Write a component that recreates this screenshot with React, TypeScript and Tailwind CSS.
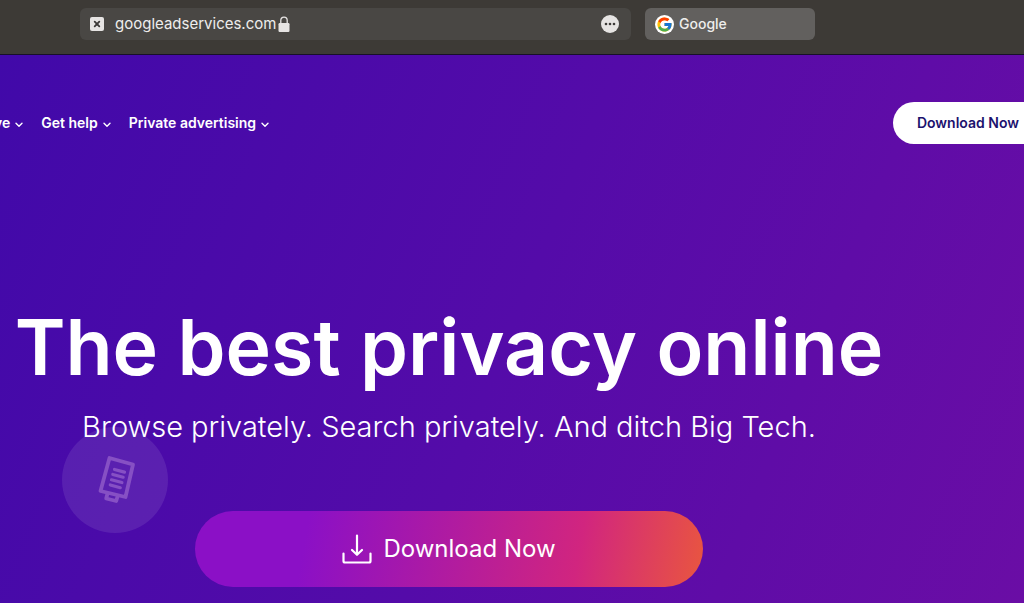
import { FcGoogle } from "react-icons/fc";

interface INavItem {
    title: string
};

const navItems = ["ve", "Get help", "Private advertising"];

function BrowserBar() {
    return (
        <header className="flex h-[55px] items-start border-b border-[#17102a] bg-[#3d3a36] pt-2 pl-20 font-['Inter',sans-serif] text-sm font-medium text-[#eeedec]">
            <div className="mr-[14px] flex h-8 w-[551px] items-center rounded-md bg-[#494744] pr-3 pl-[10px]">
                <button type="button" aria-label="Stop loading" className="mr-[11px] h-[14px] w-[14px]">
                    <svg viewBox="0 0 14 14" className="h-full w-full">
                        <rect width="14" height="14" rx="2" fill="#e6e4e3" />
                        <path d="M4.7 4.7l4.6 4.6M9.3 4.7L4.7 9.3" stroke="#3c3a38" strokeWidth="1.8" strokeLinecap="round" />
                    </svg>
                </button>
                <input aria-label="Address" defaultValue="googleadservices.com" className="w-[163px] bg-transparent text-[15px] font-normal outline-none" />
                <svg viewBox="0 0 12 16" className="h-4 w-3">
                    <rect x="0.5" y="7" width="11" height="9" rx="1.2" fill="#e6e4e3" />
                    <path d="M2.8 7.5V4.4a3.2 3.2 0 0 1 6.4 0v3.1" fill="none" stroke="#e6e4e3" strokeWidth="1.3" />
                </svg>
                <button type="button" aria-label="Page menu" className="ml-auto h-[18px] w-[18px]">
                    <svg viewBox="0 0 18 18" className="h-full w-full">
                        <circle cx="9" cy="9" r="9" fill="#e6e4e3" />
                        <circle cx="5" cy="9" r="1.3" fill="#3c3a38" />
                        <circle cx="9" cy="9" r="1.3" fill="#3c3a38" />
                        <circle cx="13" cy="9" r="1.3" fill="#3c3a38" />
                    </svg>
                </button>
            </div>
            <button type="button" className="flex h-8 w-[170px] items-center gap-[5px] rounded-md bg-[#62605e] pl-[10px]">
                <span className="flex h-[19px] w-[19px] items-center justify-center rounded-full bg-white">
                    <FcGoogle size={17} />
                </span>
                Google
            </button>
        </header>
    );
};

function NavItem({ title }: INavItem) {
    return (
        <button type="button" className="flex items-center gap-[5px]">
            {title}
            <svg viewBox="0 0 8 6" className="mt-1 h-[6px] w-2" fill="none" stroke="currentColor" strokeWidth="1.4" strokeLinecap="round" strokeLinejoin="round">
                <path d="M1 1.3l3 3 3-3" />
            </svg>
        </button>
    );
};

function ReceiptBadge() {
    return (
        <svg viewBox="0 0 106 106" className="h-[106px] w-[106px]" fill="none" stroke="#8650c4" strokeLinejoin="round" strokeLinecap="round">
            <circle cx="53" cy="53" r="53" fill="#ffffff" fillOpacity="0.09" stroke="none" />
            <path d="M47.500 31L71 37.500L63.500 70L38.500 64Z" strokeWidth="3.800" />
            <path d="M52.500 42.500l10 2.600M50.800 47.500l10.400 2.700M49.500 52.800l10.400 2.700M48.300 58l10 2.700" strokeWidth="3.200" />
            <path d="M45.500 66.500l-1.300 5 10 2.500 1.500-5" strokeWidth="3.800" />
        </svg>
    );
};

export default function App() {
    return (
        <div className="flex min-h-screen flex-col overflow-hidden">
            <BrowserBar />
            <main className="grow bg-linear-[112deg,#4109a9,#540ba9_50%,#6a0da5] font-['Inter',sans-serif] text-white">
                <div className="flex h-[136px] items-center justify-between">
                    <nav className="-ml-[6px] flex gap-[18px] text-sm font-semibold">
                        {navItems.map(item => <NavItem key={item} title={item} />)}
                    </nav>
                    <a href="#download" className="-mr-6 flex h-[42px] items-center rounded-l-full bg-white pr-[29px] pl-6 text-sm font-semibold whitespace-nowrap text-[#1c126e]">
                        Download Now
                    </a>
                </div>
                <section className="flex flex-col items-center pt-[102px] pr-[126px] pb-4">
                    <h1 className="text-[77px] leading-[108px] font-semibold whitespace-nowrap">The best privacy online</h1>
                    <div className="relative flex w-full justify-center">
                        <div className="absolute top-[26px] left-[62px]">
                            <ReceiptBadge />
                        </div>
                        <p className="relative text-[29px] leading-[52px] font-light whitespace-nowrap">Browse privately. Search privately. And ditch Big Tech.</p>
                    </div>
                    <a href="#download" className="mt-[58px] flex h-[76px] w-[508px] items-center justify-center gap-[11px] rounded-full bg-linear-[100deg,#8b10c6_22%,#d1257f_75%,#e9563f] text-2xl">
                        <svg viewBox="0 0 30 30" className="h-[30px] w-[30px]" fill="none" stroke="currentColor" strokeWidth="2.2" strokeLinecap="round" strokeLinejoin="round">
                            <path d="M15 1.500v19M10 16l5 4.800 5-4.800M1.500 19.500V27a1.500 1.500 0 0 0 1.500 1.500h24a1.500 1.500 0 0 0 1.500-1.500v-7.500" />
                        </svg>
                        Download Now
                    </a>
                </section>
            </main>
        </div>
    );
};
